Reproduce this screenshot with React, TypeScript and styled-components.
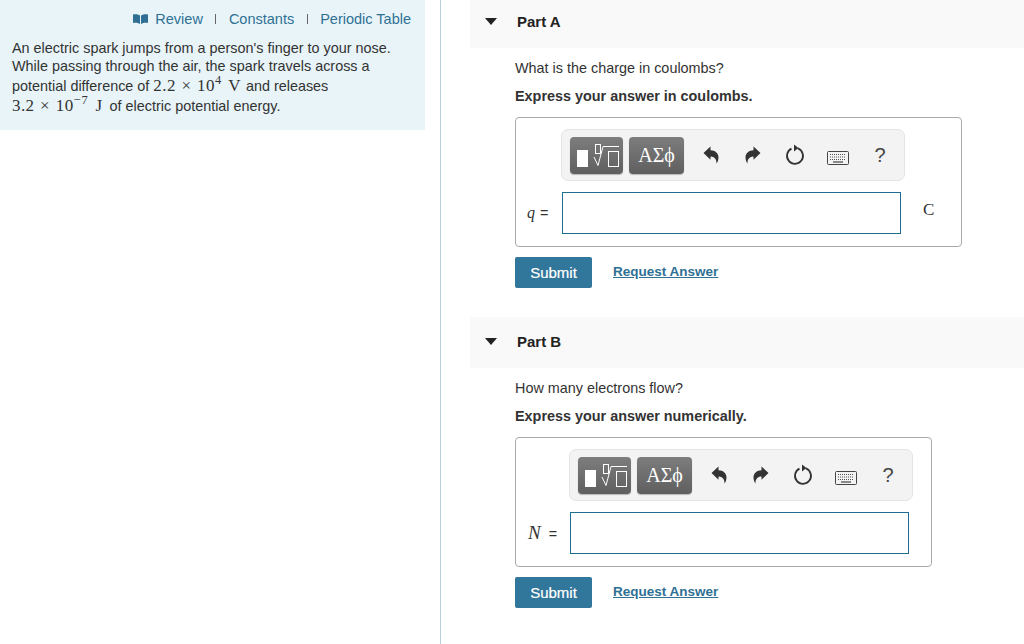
import React, { FC } from 'react';
import styled, { createGlobalStyle } from 'styled-components';

const linkColor = '#2f7195';
const textColor = '#2b2b2b';

const GlobalStyle = createGlobalStyle`
  html, body {
    margin: 0;
    padding: 0;
    background: #fff;
    font-family: "Liberation Sans", Arial, sans-serif;
    font-size: 14.4px;
    color: ${textColor};
  }
`;

const Page = styled.div`
  display: flex;
  width: 1024px;
  height: 644px;
  overflow: hidden;
`;

const LeftColumn = styled.div`
  width: 440px;
  flex-shrink: 0;
  border-right: 1px solid #b9cfd9;
`;

const Notice = styled.div`
  width: 425px;
  height: 130px;
  box-sizing: border-box;
  background: #e8f4f8;
  padding: 10px 0 0 12px;
`;

const NoticeLinks = styled.div`
  display: flex;
  justify-content: flex-end;
  align-items: center;
  height: 17px;
  padding-right: 14px;
  color: ${linkColor};
  font-size: 14.5px;
`;

const LinkSep = styled.span`
  width: 1px;
  height: 10px;
  background: #666;
  margin: 1px 12.5px 0 12.5px;
`;

const BookIcon = styled.svg`
  width: 15px;
  height: 10px;
  margin-right: 7px;
`;

const NoticeText = styled.div`
  margin-top: 12px;
`;

const TextLine = styled.div<{ $h: number }>`
  height: ${p => p.$h}px;
  line-height: ${p => p.$h}px;
  white-space: nowrap;
  color: #333;
`;

const MathText = styled.span`
  font-family: "Liberation Serif", "Times New Roman", serif;
  font-size: 17px;
  letter-spacing: 0.4px;
`;

const Times = styled.span`
  margin: 0 1px;
`;

const Sup = styled.sup<{ $spaced?: boolean }>`
  font-size: 12.5px;
  line-height: 0;
  vertical-align: 7px;
  letter-spacing: ${p => (p.$spaced ? 1 : 0.4)}px;
`;

const Unit = styled.span<{ $after: number }>`
  margin-left: 2px;
  margin-right: ${p => p.$after}px;
`;

const RightColumn = styled.div`
  flex: 1;
  padding-left: 29px;
`;

const PartHeader = styled.div`
  display: flex;
  align-items: center;
  height: 48px;
  background: #f9f9f9;
  font-size: 15px;
  font-weight: bold;
  color: #222;
  padding-left: 15px;
  padding-bottom: 6px;
  box-sizing: border-box;
`;

const PartB = styled(PartHeader)`
  height: 51px;
  padding-bottom: 3px;
  margin-top: 29px;
`;

const Caret = styled.span`
  width: 0;
  height: 0;
  border-left: 6px solid transparent;
  border-right: 6px solid transparent;
  border-top: 7px solid #222;
  margin-right: 20px;
`;

const PartBody = styled.div`
  padding-left: 45px;
`;

const Question = styled.div`
  height: 17px;
  line-height: 17px;
  margin-top: 12px;
  color: #333;
`;

const Instruction = styled.div`
  height: 17px;
  line-height: 17px;
  margin-top: 11px;
  font-weight: bold;
  color: #333;
`;

const AnswerBox = styled.div<{ $width: number }>`
  width: ${p => p.$width}px;
  height: 130px;
  box-sizing: border-box;
  margin-top: 12px;
  border: 1px solid #aaa;
  border-radius: 4px;
  padding-top: 11px;
`;

const Toolbar = styled.div<{ $indent: number }>`
  display: flex;
  align-items: center;
  width: 344px;
  height: 52px;
  box-sizing: border-box;
  margin-left: ${p => p.$indent}px;
  background: #f3f3f3;
  border: 1px solid #e4e4e4;
  border-radius: 7px;
  padding-left: 8px;
`;

const PaletteButton = styled.div<{ $w: number }>`
  display: flex;
  align-items: center;
  justify-content: center;
  width: ${p => p.$w}px;
  height: 37px;
  margin-right: 6px;
  border-radius: 4px;
  background: linear-gradient(#7d7d7d, #5f5f5f);
  color: #fff;
  font-family: "Liberation Serif", serif;
  font-size: 20px;
  box-shadow: 0 1px 1px rgba(0, 0, 0, 0.25);
`;

const ToolSlot = styled.div`
  display: flex;
  align-items: center;
  justify-content: center;
  width: 42px;
  height: 37px;
  color: #444;
  font-size: 20px;
`;

const HelpMark = styled.span`
  margin-left: 2px;
`;

const KeyboardSvg = styled.svg`
  margin: 5px 0 0 2px;
`;

const InputRow = styled.div`
  display: flex;
  align-items: center;
  margin-top: 11px;
`;

const VarLabel = styled.div<{ $w: number }>`
  width: ${p => p.$w}px;
  box-sizing: border-box;
  padding: 0 0 1px 11px;
  white-space: nowrap;
  color: #333;
`;

const VarName = styled.i<{ $big?: boolean }>`
  font-family: "Liberation Serif", serif;
  font-size: ${p => (p.$big ? 19 : 16)}px;
  margin-right: ${p => (p.$big ? 8 : 5)}px;
  margin-left: ${p => (p.$big ? 1 : 0)}px;
`;

const AnswerField = styled.div`
  width: 339px;
  height: 42px;
  box-sizing: border-box;
  border: 1px solid #1f6d8e;
  background: #fff;
`;

const UnitLabel = styled.div`
  margin-left: 22px;
  margin-top: -6px;
  font-family: "Liberation Serif", serif;
  font-size: 17px;
  color: #333;
`;

const Actions = styled.div`
  display: flex;
  align-items: center;
  margin-top: 10px;
`;

const SubmitButton = styled.div`
  display: flex;
  align-items: center;
  justify-content: center;
  width: 77px;
  height: 31px;
  background: #31769b;
  border-radius: 2px;
  color: #fff;
  font-size: 15px;
  -webkit-text-stroke: 0.2px #fff;
`;

const RequestLink = styled.div`
  margin-left: 21px;
  margin-top: -2px;
  color: ${linkColor};
  font-size: 13.5px;
  font-weight: bold;
  text-decoration: underline;
`;

const ReplyIcon: FC<{ flip?: boolean }> = ({ flip }) => (
  <svg width="16" height="18" viewBox="0 0 16 18" style={flip ? { transform: 'scaleX(-1)' } : undefined}>
    <path d="M0.5 7 L7.5 0.5 V4.2 C12.5 4.2 15.5 7.5 15.5 11.5 C15.5 14 14.5 16.5 13.5 17.5 C13.8 13.5 11.5 10.5 7.5 10.5 V13.8 Z" fill="#333" />
  </svg>
);

const RefreshIcon: FC = () => (
  <svg width="20" height="22" viewBox="0 0 20 22">
    <path d="M6.5 4.6 A8 8 0 1 0 13 4.4" fill="none" stroke="#333" strokeWidth="1.8" />
    <path d="M9 0.5 L13.5 4 L9 7.5 Z" fill="#333" />
  </svg>
);

const KeyboardIcon: FC = () => (
  <KeyboardSvg width="22" height="14" viewBox="0 0 22 14">
    <rect x="0.5" y="0.5" width="21" height="13" rx="1" fill="#f3f3f3" stroke="#444" />
    <path d="M3 3.5 H19 M3 6 H19 M3 8.5 H19" stroke="#555" strokeWidth="1.2" strokeDasharray="1 1" />
    <path d="M6 11 H16" stroke="#444" strokeWidth="1.2" />
  </KeyboardSvg>
);

const TemplateIcon: FC = () => (
  <svg width="53" height="37" viewBox="0 0 53 37">
    <rect x="7" y="13" width="11" height="17" fill="#fff" />
    <rect x="25.5" y="7.5" width="5" height="9" fill="none" stroke="#fff" />
    <path d="M24 20 L28 28.5 L33 9.5 H49" fill="none" stroke="#fff" />
    <rect x="38.5" y="14.5" width="10" height="15" fill="none" stroke="#fff" />
  </svg>
);

interface AnswerProps {
  question: string;
  instruction: string;
  variable: string;
  unit?: string;
  width: number;
  indent: number;
  labelWidth: number;
}

const Answer: FC<AnswerProps> = ({ question, instruction, variable, unit, width, indent, labelWidth }) => (
  <PartBody>
    <Question>{question}</Question>
    <Instruction>{instruction}</Instruction>
    <AnswerBox $width={width}>
      <Toolbar $indent={indent}>
        <PaletteButton $w={53}>
          <TemplateIcon />
        </PaletteButton>
        <PaletteButton $w={55}>ΑΣϕ</PaletteButton>
        <ToolSlot>
          <ReplyIcon />
        </ToolSlot>
        <ToolSlot>
          <ReplyIcon flip />
        </ToolSlot>
        <ToolSlot>
          <RefreshIcon />
        </ToolSlot>
        <ToolSlot>
          <KeyboardIcon />
        </ToolSlot>
        <ToolSlot>
          <HelpMark>?</HelpMark>
        </ToolSlot>
      </Toolbar>
      <InputRow>
        <VarLabel $w={labelWidth}>
          <VarName $big={variable === 'N'}>{variable}</VarName>=
        </VarLabel>
        <AnswerField />
        {unit && <UnitLabel>{unit}</UnitLabel>}
      </InputRow>
    </AnswerBox>
    <Actions>
      <SubmitButton>Submit</SubmitButton>
      <RequestLink>Request Answer</RequestLink>
    </Actions>
  </PartBody>
);

const App: FC = () => (
  <Page>
    <GlobalStyle />
    <LeftColumn>
      <Notice>
        <NoticeLinks>
          <BookIcon viewBox="0 0 15 10">
            <path d="M0 0.5 C3 0 5 0.5 7 1.5 V10 C5 9 3 8.5 0 9 Z M8 1.5 C10 0.5 12 0 15 0.5 V9 C12 8.5 10 9 8 10 Z" fill="#2f6f93" />
          </BookIcon>
          Review
          <LinkSep />
          Constants
          <LinkSep />
          Periodic Table
        </NoticeLinks>
        <NoticeText>
          <TextLine $h={18}>An electric spark jumps from a person's finger to your nose.</TextLine>
          <TextLine $h={19}>While passing through the air, the spark travels across a</TextLine>
          <TextLine $h={20}>
            potential difference of <MathText>2.2 <Times>×</Times> 10<Sup>4</Sup> <Unit $after={1}>V</Unit></MathText> and releases
          </TextLine>
          <TextLine $h={20}>
            <MathText>3.2 <Times>×</Times> 10<Sup $spaced>−7</Sup> <Unit $after={3}>J</Unit></MathText> of electric potential energy.
          </TextLine>
        </NoticeText>
      </Notice>
    </LeftColumn>
    <RightColumn>
      <PartHeader>
        <Caret />
        Part A
      </PartHeader>
      <Answer
        question="What is the charge in coulombs?"
        instruction="Express your answer in coulombs."
        variable="q"
        unit="C"
        width={447}
        indent={45}
        labelWidth={46}
      />
      <PartB>
        <Caret />
        Part B
      </PartB>
      <Answer
        question="How many electrons flow?"
        instruction="Express your answer numerically."
        variable="N"
        width={417}
        indent={53}
        labelWidth={54}
      />
    </RightColumn>
  </Page>
);

export default App;
